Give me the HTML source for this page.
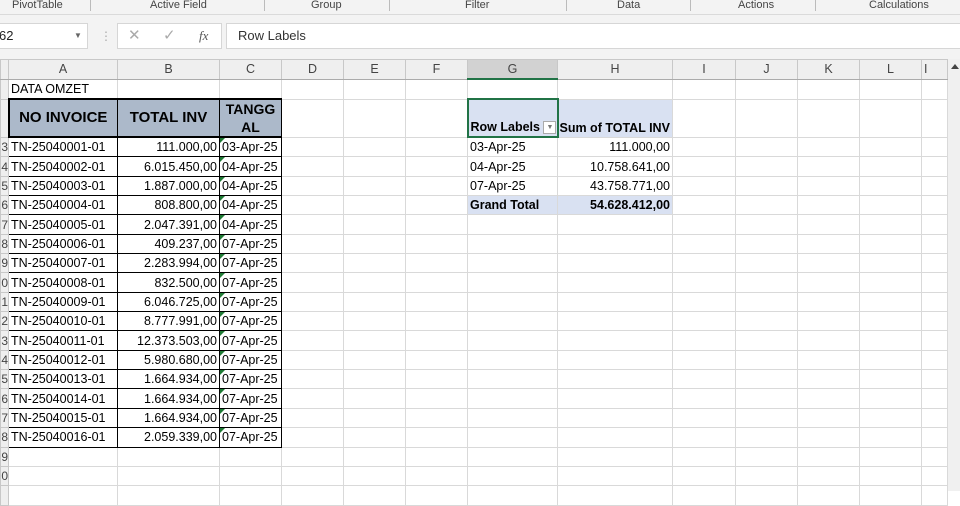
<!DOCTYPE html>
<html><head><meta charset="utf-8"><style>
body{margin:0;width:960px;height:491px;overflow:hidden;background:#fff;font-family:"Liberation Sans",Arial,sans-serif;position:relative}
.rib{position:absolute;left:0;top:0;width:960px;height:14px;background:#f3f3f3;border-bottom:1px solid #dadada;font-size:11px;color:#444}
.rib span{position:absolute;top:-1px}
.rib i{position:absolute;top:0;width:1px;height:11px;background:#bbb}
.fb{position:absolute;left:0;top:15px;width:960px;height:44px;background:#f3f3f3}
.box{position:absolute;background:#fff;border:1px solid #d6d6d6}
table{position:absolute;left:0;top:59px;width:947px;border-collapse:collapse;table-layout:fixed;font-size:12.5px;color:#000}
td{border:1px solid #d9d9d9;padding:0 2px;white-space:nowrap;overflow:hidden;height:18px;line-height:18px;position:relative}
tr.h td{background:#efefef;color:#444;text-align:center;border-color:#c8c8c8;border-bottom:1px solid #ababab;height:18px}
td.rh{background:#efefef;color:#444;text-align:right;padding:0;border-color:#c8c8c8;font-size:12px}
td.d{border:1px solid #000}
td.r{text-align:right}
td.hd{background:#acb9ca;font-weight:bold;font-size:15px;text-align:center;border:1px solid #000;border-width:2px 1px 2px 1px}
td.t:before{content:"";position:absolute;left:0;top:0;border-top:5px solid #1e7b34;border-right:5px solid transparent}
td.pv{background:#d9e1f2}
td.gt{background:#d9e1f2;font-weight:bold;border-top:1px solid #8ea9db}
tr.n td{height:18.35px;line-height:18px}
</style></head><body>
<div class="rib">
<span style="left:12px">PivotTable</span><i style="left:90px"></i>
<span style="left:150px">Active Field</span><i style="left:264px"></i>
<span style="left:311px">Group</span><i style="left:389px"></i>
<span style="left:465px">Filter</span><i style="left:566px"></i>
<span style="left:617px">Data</span><i style="left:690px"></i>
<span style="left:738px">Actions</span><i style="left:815px"></i>
<span style="left:869px">Calculations</span>
</div>
<div class="fb">
<div class="box" style="left:-2px;top:8px;width:88px;height:24px;font-size:13px;line-height:24px;color:#222">62<span style="position:absolute;left:75px;top:0;font-size:8px;color:#666">▼</span></div>
<div style="position:absolute;left:100px;top:14px;color:#aaa;font-size:12px">⋮</div>
<div class="box" style="left:117px;top:8px;width:103px;height:24px;color:#aaa;font-size:15px;line-height:24px"><span style="position:absolute;left:10px">✕</span><span style="position:absolute;left:45px">✓</span><span style="position:absolute;left:81px;font-family:'Liberation Serif',serif;font-style:italic;color:#555;font-size:13px">fx</span></div>
<div class="box" style="left:226px;top:8px;width:740px;height:24px;font-size:13px;line-height:24px;color:#333"><span style="margin-left:11px">Row Labels</span></div>
</div>
<div style="position:absolute;left:947px;top:59px;width:13px;height:432px;background:#f0f0f0;border-left:1px solid #ccc"><div style="position:absolute;left:3px;top:5px;border-bottom:5px solid #444;border-left:4px solid transparent;border-right:4px solid transparent"></div></div>
<table>
<colgroup><col style="width:8px"><col style="width:109px"><col style="width:102px"><col style="width:62px"><col style="width:62px"><col style="width:62px"><col style="width:62px"><col style="width:90px"><col style="width:115px"><col style="width:63px"><col style="width:62px"><col style="width:62px"><col style="width:62px"><col style="width:26px"></colgroup>
<tr class="h"><td></td><td>A</td><td>B</td><td>C</td><td>D</td><td>E</td><td>F</td><td style="background:#d2d2d2;border-bottom:2px solid #217346">G</td><td>H</td><td>I</td><td>J</td><td>K</td><td>L</td><td style="text-align:left">I</td></tr>
<tr><td class="rh"></td><td>DATA OMZET</td><td></td><td></td><td></td><td></td><td></td><td></td><td></td><td></td><td></td><td></td><td></td><td></td></tr>
<tr><td class="rh" style="height:37px"></td><td class="hd" style="border-left:2px solid #000">NO INVOICE</td><td class="hd">TOTAL INV</td><td class="hd" style="line-height:18px;font-size:14px">TANGG<br>AL</td><td></td><td></td><td></td><td class="pv" style="border:2px solid #217346;vertical-align:bottom;font-weight:bold;padding-bottom:0">Row Labels <span style="display:inline-block;width:11px;height:11px;border:1px solid #aaa;background:#fff;font-size:7px;line-height:11px;text-align:center;color:#777;vertical-align:middle">▼</span></td><td class="pv" style="vertical-align:bottom;font-weight:bold;padding:0 2px 0 1px">Sum of TOTAL INV</td><td></td><td></td><td></td><td></td><td></td></tr>
<tr class="n"><td class="rh">3</td><td class="d">TN-25040001-01</td><td class="d r">111.000,00</td><td class="d t">03-Apr-25</td><td></td><td></td><td></td><td>03-Apr-25</td><td class="r">111.000,00</td><td></td><td></td><td></td><td></td><td></td></tr>
<tr class="n"><td class="rh">4</td><td class="d">TN-25040002-01</td><td class="d r">6.015.450,00</td><td class="d t">04-Apr-25</td><td></td><td></td><td></td><td>04-Apr-25</td><td class="r">10.758.641,00</td><td></td><td></td><td></td><td></td><td></td></tr>
<tr class="n"><td class="rh">5</td><td class="d">TN-25040003-01</td><td class="d r">1.887.000,00</td><td class="d t">04-Apr-25</td><td></td><td></td><td></td><td>07-Apr-25</td><td class="r">43.758.771,00</td><td></td><td></td><td></td><td></td><td></td></tr>
<tr class="n"><td class="rh">6</td><td class="d">TN-25040004-01</td><td class="d r">808.800,00</td><td class="d t">04-Apr-25</td><td></td><td></td><td></td><td class="gt">Grand Total</td><td class="gt r">54.628.412,00</td><td></td><td></td><td></td><td></td><td></td></tr>
<tr class="n"><td class="rh">7</td><td class="d">TN-25040005-01</td><td class="d r">2.047.391,00</td><td class="d t">04-Apr-25</td><td></td><td></td><td></td><td></td><td></td><td></td><td></td><td></td><td></td><td></td></tr>
<tr class="n"><td class="rh">8</td><td class="d">TN-25040006-01</td><td class="d r">409.237,00</td><td class="d t">07-Apr-25</td><td></td><td></td><td></td><td></td><td></td><td></td><td></td><td></td><td></td><td></td></tr>
<tr class="n"><td class="rh">9</td><td class="d">TN-25040007-01</td><td class="d r">2.283.994,00</td><td class="d t">07-Apr-25</td><td></td><td></td><td></td><td></td><td></td><td></td><td></td><td></td><td></td><td></td></tr>
<tr class="n"><td class="rh">0</td><td class="d">TN-25040008-01</td><td class="d r">832.500,00</td><td class="d t">07-Apr-25</td><td></td><td></td><td></td><td></td><td></td><td></td><td></td><td></td><td></td><td></td></tr>
<tr class="n"><td class="rh">1</td><td class="d">TN-25040009-01</td><td class="d r">6.046.725,00</td><td class="d t">07-Apr-25</td><td></td><td></td><td></td><td></td><td></td><td></td><td></td><td></td><td></td><td></td></tr>
<tr class="n"><td class="rh">2</td><td class="d">TN-25040010-01</td><td class="d r">8.777.991,00</td><td class="d t">07-Apr-25</td><td></td><td></td><td></td><td></td><td></td><td></td><td></td><td></td><td></td><td></td></tr>
<tr class="n"><td class="rh">3</td><td class="d">TN-25040011-01</td><td class="d r">12.373.503,00</td><td class="d t">07-Apr-25</td><td></td><td></td><td></td><td></td><td></td><td></td><td></td><td></td><td></td><td></td></tr>
<tr class="n"><td class="rh">4</td><td class="d">TN-25040012-01</td><td class="d r">5.980.680,00</td><td class="d t">07-Apr-25</td><td></td><td></td><td></td><td></td><td></td><td></td><td></td><td></td><td></td><td></td></tr>
<tr class="n"><td class="rh">5</td><td class="d">TN-25040013-01</td><td class="d r">1.664.934,00</td><td class="d t">07-Apr-25</td><td></td><td></td><td></td><td></td><td></td><td></td><td></td><td></td><td></td><td></td></tr>
<tr class="n"><td class="rh">6</td><td class="d">TN-25040014-01</td><td class="d r">1.664.934,00</td><td class="d t">07-Apr-25</td><td></td><td></td><td></td><td></td><td></td><td></td><td></td><td></td><td></td><td></td></tr>
<tr class="n"><td class="rh">7</td><td class="d">TN-25040015-01</td><td class="d r">1.664.934,00</td><td class="d t">07-Apr-25</td><td></td><td></td><td></td><td></td><td></td><td></td><td></td><td></td><td></td><td></td></tr>
<tr class="n"><td class="rh">8</td><td class="d">TN-25040016-01</td><td class="d r">2.059.339,00</td><td class="d t">07-Apr-25</td><td></td><td></td><td></td><td></td><td></td><td></td><td></td><td></td><td></td><td></td></tr>
<tr class="n"><td class="rh">9</td><td></td><td></td><td></td><td></td><td></td><td></td><td></td><td></td><td></td><td></td><td></td><td></td><td></td></tr>
<tr class="n"><td class="rh">0</td><td></td><td></td><td></td><td></td><td></td><td></td><td></td><td></td><td></td><td></td><td></td><td></td><td></td></tr>
<tr class="n"><td class="rh"></td><td></td><td></td><td></td><td></td><td></td><td></td><td></td><td></td><td></td><td></td><td></td><td></td><td></td></tr>
</table>
</body></html>
